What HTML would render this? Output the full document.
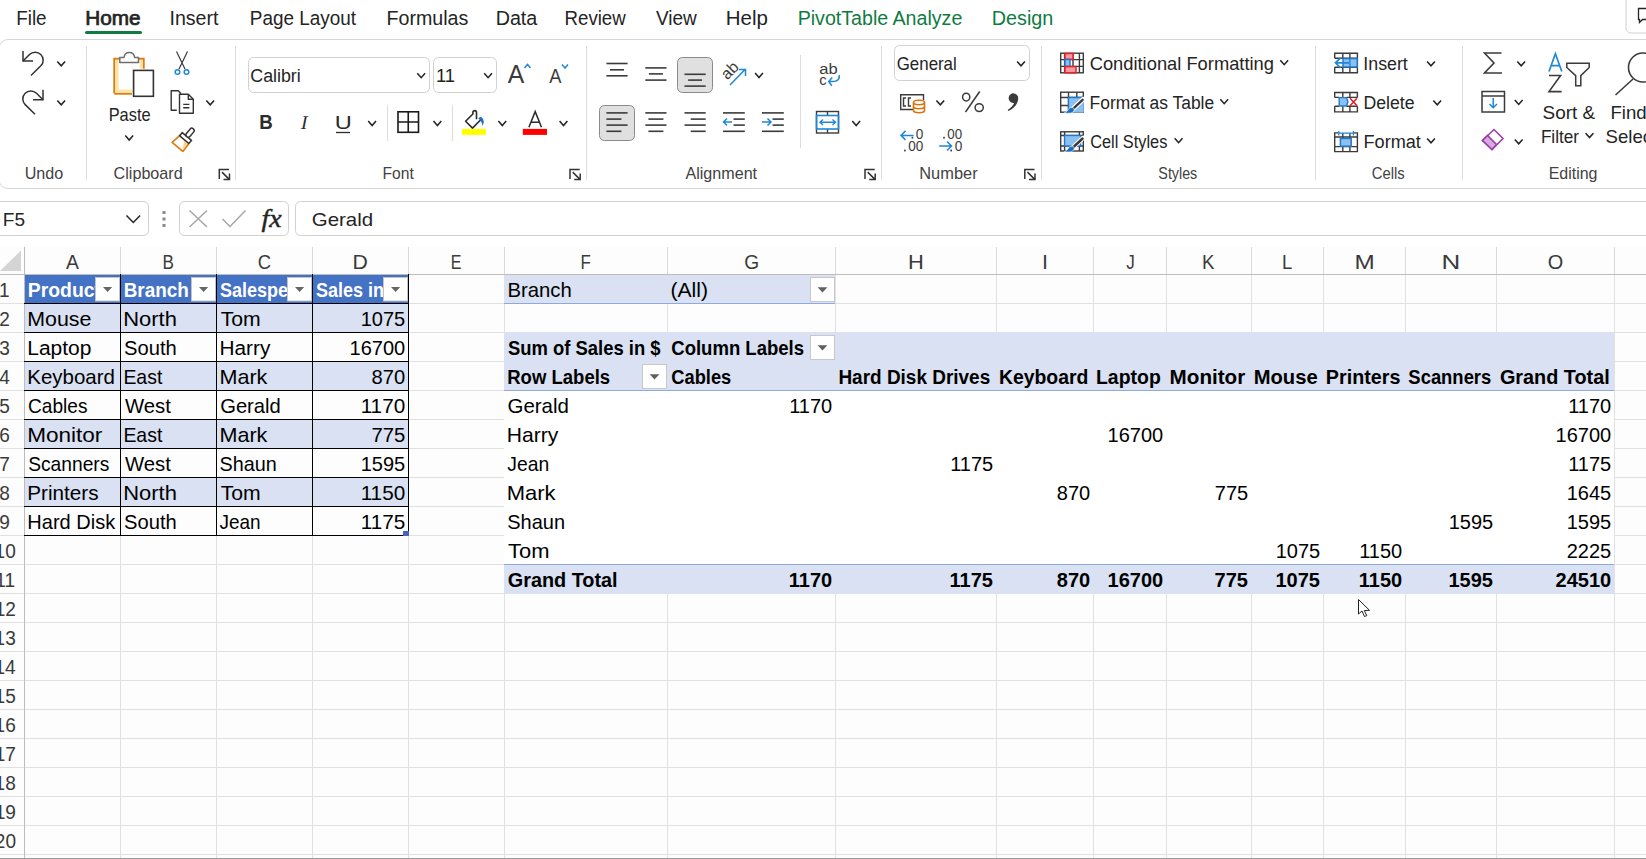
<!DOCTYPE html>
<html><head><meta charset="utf-8"><style>
html,body{margin:0;padding:0;background:#ffffff;width:1646px;height:859px;overflow:hidden}
svg{display:block;font-family:"Liberation Sans", sans-serif}
</style></head><body>
<svg width="1646" height="859" viewBox="0 0 1646 859" font-family='"Liberation Sans", sans-serif'>
<text transform="matrix(0.9669,0,0,1,16.24,25.00)" font-size="19.5" fill="#242424">File</text>
<text transform="matrix(1.0650,0,0,1,85.19,25.00)" font-size="19.5" fill="#242424" stroke="#242424" stroke-width="0.7">Home</text>
<text transform="matrix(1.0043,0,0,1,169.49,25.00)" font-size="19.5" fill="#242424">Insert</text>
<text transform="matrix(0.9709,0,0,1,249.84,25.00)" font-size="19.5" fill="#242424">Page Layout</text>
<text transform="matrix(1.0079,0,0,1,386.48,25.00)" font-size="19.5" fill="#242424">Formulas</text>
<text transform="matrix(1.0105,0,0,1,495.67,25.00)" font-size="19.5" fill="#242424">Data</text>
<text transform="matrix(0.9567,0,0,1,564.56,25.00)" font-size="19.5" fill="#242424">Review</text>
<text transform="matrix(0.9743,0,0,1,655.91,25.00)" font-size="19.5" fill="#242424">View</text>
<text transform="matrix(1.0509,0,0,1,725.71,25.00)" font-size="19.5" fill="#242424">Help</text>
<text transform="matrix(1.0067,0,0,1,797.68,25.00)" font-size="19.5" fill="#0f7b3f">PivotTable Analyze</text>
<text transform="matrix(1.0144,0,0,1,991.77,25.00)" font-size="19.5" fill="#0f7b3f">Design</text>
<rect x="85" y="31" width="57" height="3" fill="#107c41" rx="1.5"/>
<rect x="1626" y="-4" width="40" height="37" rx="5" fill="none" stroke="#d1d1d1" stroke-width="1"/>
<path d="M1638.5 8.5 h10 v11 h-6 l-3 3 v-3 h-1 z" fill="none" stroke="#242424" stroke-width="1.3"/>
<rect x="-1" y="39.5" width="1700" height="149" rx="9" fill="#ffffff" stroke="#d6d6d6" stroke-width="1"/>
<line x1="86.5" y1="46" x2="86.5" y2="180" stroke="#dcdcdc" stroke-width="1" />
<line x1="235.5" y1="46" x2="235.5" y2="180" stroke="#dcdcdc" stroke-width="1" />
<line x1="586.5" y1="46" x2="586.5" y2="180" stroke="#dcdcdc" stroke-width="1" />
<line x1="881.5" y1="46" x2="881.5" y2="180" stroke="#dcdcdc" stroke-width="1" />
<line x1="1041.5" y1="46" x2="1041.5" y2="180" stroke="#dcdcdc" stroke-width="1" />
<line x1="1315.5" y1="46" x2="1315.5" y2="180" stroke="#dcdcdc" stroke-width="1" />
<line x1="1462.5" y1="46" x2="1462.5" y2="180" stroke="#dcdcdc" stroke-width="1" />
<text transform="matrix(1.0066,0,0,1,24.65,179.20)" font-size="16" fill="#424242">Undo</text>
<text transform="matrix(1.0093,0,0,1,113.59,179.20)" font-size="16" fill="#424242">Clipboard</text>
<text transform="matrix(0.9784,0,0,1,382.51,179.20)" font-size="16" fill="#424242">Font</text>
<text transform="matrix(1.0070,0,0,1,685.46,179.20)" font-size="16" fill="#424242">Alignment</text>
<text transform="matrix(1.0268,0,0,1,919.24,179.20)" font-size="16" fill="#424242">Number</text>
<text transform="matrix(0.8940,0,0,1,1158.36,179.20)" font-size="16" fill="#424242">Styles</text>
<text transform="matrix(0.9298,0,0,1,1371.76,179.20)" font-size="16" fill="#424242">Cells</text>
<text transform="matrix(0.9979,0,0,1,1548.68,179.20)" font-size="16" fill="#424242">Editing</text>
<g fill="none" stroke="#333" stroke-width="1.5"><path d="M219.3 179.1 V169.4 H229.0"/><path d="M222.0 172.1 L229.5 179.6 M229.5 173.6 V179.6 H223.5"/></g>
<g fill="none" stroke="#333" stroke-width="1.5"><path d="M570.0 179.1 V169.4 H579.7"/><path d="M572.7 172.1 L580.2 179.6 M580.2 173.6 V179.6 H574.2"/></g>
<g fill="none" stroke="#333" stroke-width="1.5"><path d="M865.0 179.1 V169.4 H874.7"/><path d="M867.7 172.1 L875.2 179.6 M875.2 173.6 V179.6 H869.2"/></g>
<g fill="none" stroke="#333" stroke-width="1.5"><path d="M1024.8 179.1 V169.4 H1034.5"/><path d="M1027.5 172.1 L1035 179.6 M1035 173.6 V179.6 H1029"/></g>
<g fill="none" stroke="#333" stroke-width="1.5"><path d="M23 51 V61 H33" /><path d="M23 61 L29.5 54.5 A8 8 0 1 1 40.82 65.82 L31 75.5"/></g>
<g fill="none" stroke="#333" stroke-width="1.5" transform="translate(66,38.8) scale(-1,1)"><path d="M23 51 V61 H33" /><path d="M23 61 L29.5 54.5 A8 8 0 1 1 40.82 65.82 L31 75.5"/></g>
<path d="M57.30 61.40 L61.20 65.80 L65.10 61.40" fill="none" stroke="#242424" stroke-width="1.55"/>
<path d="M57.30 100.40 L61.20 104.80 L65.10 100.40" fill="none" stroke="#242424" stroke-width="1.55"/>
<path d="M114.3 93.2 V58.8 H143.7 V68.7" fill="none" stroke="#e07b12" stroke-width="2"/><path d="M114.3 93.7 H132" fill="none" stroke="#e07b12" stroke-width="2"/><path d="M115.3 59.8 V92.7 H132.5 V59.8 Z" fill="#fbe3a4"/><path d="M118.6 59.8 V89.6 H132.5 V59.8 Z" fill="#ffffff"/><path d="M139.6 59.8 H142.7 V68.5 H139.6 Z" fill="#fbe3a4"/><path d="M119.8 62.5 V57.5 H124 Q124.5 52.5 129.3 52.5 Q134.1 52.5 134.6 57.5 H138.5 V62.5 Z" fill="#ffffff" stroke="#6e6e6e" stroke-width="1.5" stroke-linejoin="round"/><rect x="133.6" y="70.4" width="19.8" height="25.9" fill="#ffffff" stroke="#333" stroke-width="1.6"/>
<text transform="matrix(0.8828,0,0,1,108.65,121.20)" font-size="18.6" fill="#242424">Paste</text>
<path d="M125.30 135.60 L129.20 140.00 L133.10 135.60" fill="none" stroke="#242424" stroke-width="1.55"/>
<g fill="none" stroke="#3b3b3b" stroke-width="1.2"><path d="M176.5 51.5 L185 69 M187.5 51.5 L179 69"/></g><g fill="none" stroke="#1e88d6" stroke-width="1.5"><circle cx="177.5" cy="72" r="2.3"/><circle cx="186.5" cy="72" r="2.3"/></g>
<g fill="none" stroke="#333" stroke-width="1.4" stroke-linejoin="round"><path d="M176.8 110.2 H171.2 V90.8 H178.3 L181 93.8"/><path d="M179.5 94.3 H188.3 L193.3 99.3 V113.3 H179.5 Z"/><path d="M188.3 94.3 V99.3 H193.3"/><path d="M183.2 104.4 h6.2 M183.2 107.8 h6.2"/></g>
<path d="M206.30 100.40 L210.20 104.80 L214.10 100.40" fill="none" stroke="#242424" stroke-width="1.55"/>
<g transform="translate(184.6,139.2) rotate(-50)"><path d="M-0.5 -6 L-10.5 -7.5 L-10.5 6.5 L-0.5 6 Z" fill="#ffffff" stroke="#e07b12" stroke-width="1.7" stroke-linejoin="round"/><path d="M-1.5 0.5 L-9.7 5.8 L-1.5 5 Z" fill="#fbd58a"/><rect x="-0.5" y="-6" width="4" height="12" fill="#ffffff" stroke="#333" stroke-width="1.5"/><rect x="3.5" y="-2.3" width="10" height="4.6" rx="2" fill="#ffffff" stroke="#333" stroke-width="1.5"/></g>
<rect x="248.5" y="57.5" width="181" height="35" rx="5" fill="#fff" stroke="#d1d1d1"/>
<rect x="433.5" y="57.5" width="63" height="35" rx="5" fill="#fff" stroke="#d1d1d1"/>
<text transform="matrix(0.9576,0,0,1,250.31,82.00)" font-size="18.6" fill="#242424">Calibri</text>
<text transform="matrix(0.9930,0,0,1,435.91,82.00)" font-size="18.6" fill="#242424">11</text>
<path d="M417.30 73.30 L421.20 77.70 L425.10 73.30" fill="none" stroke="#242424" stroke-width="1.55"/>
<path d="M484.20 73.30 L488.10 77.70 L492.00 73.30" fill="none" stroke="#242424" stroke-width="1.55"/>
<text transform="matrix(0.9902,0,0,1,507.74,82.60)" font-size="25" fill="#3b3b3b">A</text>
<path d="M524.5 68 L527.5 64.5 L530.5 68" fill="none" stroke="#1e88d6" stroke-width="1.5"/>
<text transform="matrix(0.9132,0,0,1,549.25,82.60)" font-size="20" fill="#3b3b3b">A</text>
<path d="M562 64.5 L565 68 L568 64.5" fill="none" stroke="#1e88d6" stroke-width="1.5"/>
<text transform="matrix(0.9584,0,0,1,259.34,128.60)" font-size="19.5" font-weight="700" fill="#2b2b2b">B</text>
<text transform="matrix(1,0,-0.2,1,300,128.6)" font-size="19.5" font-family="Liberation Serif" fill="#2b2b2b">I</text>
<text transform="matrix(1.2428,0,0,1,334.67,129.30)" font-size="19" fill="#2b2b2b">U</text>
<line x1="336" y1="132.5" x2="350" y2="132.5" stroke="#2b2b2b" stroke-width="1.3" />
<path d="M368.20 121.10 L372.10 125.50 L376.00 121.10" fill="none" stroke="#242424" stroke-width="1.55"/>
<line x1="387.5" y1="105" x2="387.5" y2="141" stroke="#dcdcdc" stroke-width="1" />
<g fill="none" stroke="#1a1a1a" stroke-width="1.6"><rect x="398" y="111.8" width="20.5" height="20.5"/><path d="M408.25 111.8 V132.3 M398 122 H418.5"/></g>
<path d="M433.50 121.10 L437.40 125.50 L441.30 121.10" fill="none" stroke="#242424" stroke-width="1.55"/>
<line x1="452.5" y1="105" x2="452.5" y2="141" stroke="#dcdcdc" stroke-width="1" />
<path d="M481.2 119.3 L472.5 128.1 L465.6 121.3 L472.9 114 V112.4 A1.8 1.8 0 0 1 476.5 112.4 V119.3" fill="none" stroke="#2b2b2b" stroke-width="1.6" stroke-linejoin="round"/><path d="M478.3 118.6 Q479.5 116.3 481.5 117.2 Q484.2 119 483.8 122 L482.6 126.2 Q482 121.5 478.3 118.6 Z" fill="#1b6ec2"/>
<rect x="461.9" y="128.9" width="24.1" height="6" fill="#ffff00" />
<path d="M498.40 121.10 L502.30 125.50 L506.20 121.10" fill="none" stroke="#242424" stroke-width="1.55"/>
<path d="M528.9 127.2 L535.2 111.6 L541.5 127.2 M530.9 122.3 H539.5" fill="none" stroke="#2b2b2b" stroke-width="1.5"/>
<rect x="522.8" y="128.9" width="24.2" height="6" fill="#ff0000" />
<path d="M559.60 121.10 L563.50 125.50 L567.40 121.10" fill="none" stroke="#242424" stroke-width="1.55"/>
<rect x="677.5" y="57.5" width="35" height="35" rx="5" fill="#e0e0e0" stroke="#8a8a8a" stroke-width="1"/>
<rect x="599.5" y="105.5" width="35" height="35" rx="5" fill="#e0e0e0" stroke="#8a8a8a" stroke-width="1"/>
<line x1="606.4" y1="63.5" x2="627.6" y2="63.5" stroke="#3b3b3b" stroke-width="1.6" />
<line x1="610.0" y1="69.8" x2="624.0" y2="69.8" stroke="#3b3b3b" stroke-width="1.6" />
<line x1="606.4" y1="75.8" x2="627.6" y2="75.8" stroke="#3b3b3b" stroke-width="1.6" />
<line x1="645.3" y1="67.9" x2="666.5" y2="67.9" stroke="#3b3b3b" stroke-width="1.6" />
<line x1="648.9" y1="73.9" x2="662.9" y2="73.9" stroke="#3b3b3b" stroke-width="1.6" />
<line x1="645.3" y1="80.1" x2="666.5" y2="80.1" stroke="#3b3b3b" stroke-width="1.6" />
<line x1="684.5" y1="74.3" x2="705.7" y2="74.3" stroke="#3b3b3b" stroke-width="1.6" />
<line x1="688.1" y1="80.1" x2="702.1" y2="80.1" stroke="#3b3b3b" stroke-width="1.6" />
<line x1="684.5" y1="86.1" x2="705.7" y2="86.1" stroke="#3b3b3b" stroke-width="1.6" />
<text transform="translate(727.3,80.5) rotate(-45)" font-size="16" fill="#3b3b3b">ab</text>
<path d="M730 85 L745 69.5 M739 69.5 H745.5 V76" fill="none" stroke="#1e88d6" stroke-width="1.5"/>
<path d="M755.10 73.10 L759.00 77.50 L762.90 73.10" fill="none" stroke="#242424" stroke-width="1.55"/>
<line x1="606.4" y1="112.9" x2="627.6" y2="112.9" stroke="#3b3b3b" stroke-width="1.6" />
<line x1="606.4" y1="119.1" x2="621.4" y2="119.1" stroke="#3b3b3b" stroke-width="1.6" />
<line x1="606.4" y1="125.1" x2="627.6" y2="125.1" stroke="#3b3b3b" stroke-width="1.6" />
<line x1="606.4" y1="131.3" x2="621.4" y2="131.3" stroke="#3b3b3b" stroke-width="1.6" />
<line x1="645.3" y1="112.9" x2="666.5" y2="112.9" stroke="#3b3b3b" stroke-width="1.6" />
<line x1="648.4" y1="119.1" x2="663.4" y2="119.1" stroke="#3b3b3b" stroke-width="1.6" />
<line x1="645.3" y1="125.1" x2="666.5" y2="125.1" stroke="#3b3b3b" stroke-width="1.6" />
<line x1="648.4" y1="131.3" x2="663.4" y2="131.3" stroke="#3b3b3b" stroke-width="1.6" />
<line x1="684.5" y1="112.9" x2="705.7" y2="112.9" stroke="#3b3b3b" stroke-width="1.6" />
<line x1="690.7" y1="119.1" x2="705.7" y2="119.1" stroke="#3b3b3b" stroke-width="1.6" />
<line x1="684.5" y1="125.1" x2="705.7" y2="125.1" stroke="#3b3b3b" stroke-width="1.6" />
<line x1="690.7" y1="131.3" x2="705.7" y2="131.3" stroke="#3b3b3b" stroke-width="1.6" />
<line x1="723" y1="112.9" x2="744.8" y2="112.9" stroke="#3b3b3b" stroke-width="1.6" />
<line x1="723" y1="131.3" x2="744.8" y2="131.3" stroke="#3b3b3b" stroke-width="1.6" />
<line x1="733.5" y1="119.1" x2="744.8" y2="119.1" stroke="#3b3b3b" stroke-width="1.6" />
<line x1="733.5" y1="125.1" x2="744.8" y2="125.1" stroke="#3b3b3b" stroke-width="1.6" />
<path d="M732 122 H723.5 M727 118.5 L723.5 122 L727 125.5" fill="none" stroke="#1e88d6" stroke-width="1.5"/>
<line x1="762" y1="112.9" x2="783.8" y2="112.9" stroke="#3b3b3b" stroke-width="1.6" />
<line x1="762" y1="131.3" x2="783.8" y2="131.3" stroke="#3b3b3b" stroke-width="1.6" />
<line x1="772.5" y1="119.1" x2="783.8" y2="119.1" stroke="#3b3b3b" stroke-width="1.6" />
<line x1="772.5" y1="125.1" x2="783.8" y2="125.1" stroke="#3b3b3b" stroke-width="1.6" />
<path d="M762 122 H771 M767.5 118.5 L771 122 L767.5 125.5" fill="none" stroke="#1e88d6" stroke-width="1.5"/>
<line x1="800.5" y1="55" x2="800.5" y2="148" stroke="#dcdcdc" stroke-width="1" />
<text transform="matrix(1.0674,0,0,1,819.30,74.30)" font-size="15.5" fill="#3b3b3b">ab</text>
<text transform="matrix(0.9602,0,0,1,819.37,85.20)" font-size="15.5" fill="#3b3b3b">c</text>
<path d="M839.2 75.2 C840.2 79.8 836.5 82 829.2 81.5 M832.2 77.6 L828.7 81.5 L831.8 85.8" fill="none" stroke="#1e88d6" stroke-width="1.5"/>
<g fill="none" stroke="#3b3b3b" stroke-width="1.4"><rect x="816.5" y="111.5" width="22" height="21.5"/><path d="M827.5 111.5 V115.5 M827.5 129 V133"/></g><rect x="816.5" y="115.5" width="22" height="13.5" fill="none" stroke="#1e88d6" stroke-width="1.6"/><path d="M820 122.2 H835.5 M823 119.5 L820 122.2 L823 125 M832.5 119.5 L835.5 122.2 L832.5 125" fill="none" stroke="#1e88d6" stroke-width="1.4"/>
<path d="M852.30 121.10 L856.20 125.50 L860.10 121.10" fill="none" stroke="#242424" stroke-width="1.55"/>
<rect x="894.5" y="45.5" width="135" height="35" rx="5" fill="#fff" stroke="#d1d1d1"/>
<text transform="matrix(0.9065,0,0,1,896.76,70.00)" font-size="18.6" fill="#242424">General</text>
<path d="M1017.10 61.40 L1021.00 65.80 L1024.90 61.40" fill="none" stroke="#242424" stroke-width="1.55"/>
<g fill="none" stroke="#3b3b3b" stroke-width="1.4"><path d="M913 109.5 H900.7 V94.7 H923.5 V100"/><path d="M906 98 h-2.5 v8 h2.5 M911 98 h-2.5 v8 h2.5"/></g><g fill="#fff" stroke="#d9730d" stroke-width="1.6"><path d="M913.5 102.5 v8 a5.5 2.2 0 0 0 11 0 v-8"/><ellipse cx="919" cy="102.5" rx="5.5" ry="2.2"/><path d="M913.5 106.5 a5.5 2.2 0 0 0 11 0" fill="none"/></g>
<path d="M936.40 100.40 L940.30 104.80 L944.20 100.40" fill="none" stroke="#242424" stroke-width="1.55"/>
<g fill="none" stroke="#3b3b3b" stroke-width="1.5"><ellipse cx="966.2" cy="97.1" rx="3.6" ry="3.9"/><ellipse cx="979.2" cy="107.6" rx="4.1" ry="3.9"/><path d="M965.5 112 L979.7 91.5"/></g>
<path d="M1012.7 93.2 a5.1 5.1 0 0 1 5.5 5.6 c-0.5 6 -4.8 10 -10 12.2 l-0.5 -1 c3.2 -2 5.8 -4.8 6.3 -6.9 a5 5 0 0 1 -1.3 -9.9 z" fill="#3b3b3b"/>
<text transform="matrix(0.9723,0,0,1,915.76,138.90)" font-size="14" fill="#3b3b3b">0</text>
<rect x="911.6" y="136.8" width="1.6" height="1.8" fill="#3b3b3b"/>
<rect x="904.1" y="149.6" width="1.6" height="1.8" fill="#3b3b3b"/>
<text transform="matrix(0.9685,0,0,1,908.26,151.20)" font-size="14" fill="#3b3b3b">00</text>
<path d="M913.6 135.4 H901 M905.5 130.9 L901 135.4 L905.5 139.9" fill="none" stroke="#1e88d6" stroke-width="1.5"/>
<rect x="943.2" y="136.8" width="1.6" height="1.8" fill="#3b3b3b"/>
<text transform="matrix(0.9547,0,0,1,947.37,138.90)" font-size="14" fill="#3b3b3b">00</text>
<rect x="950.4" y="149.6" width="1.6" height="1.8" fill="#3b3b3b"/>
<text transform="matrix(0.9723,0,0,1,954.66,151.20)" font-size="14" fill="#3b3b3b">0</text>
<path d="M939.2 146 H951.5 M947 141.5 L951.5 146 L947 150.5" fill="none" stroke="#1e88d6" stroke-width="1.5"/>
<g fill="none" stroke="#3b3b3b" stroke-width="1.4"><rect x="1060.7" y="53.2" width="22.6" height="19.6"/><path d="M1064.6 53.2 V72.8 M1073 53.2 V72.8 M1079.4 53.2 V72.8 M1060.7 59.6 H1083.3 M1060.7 66.4 H1083.3"/></g>
<rect x="1065" y="53.5" width="8" height="5.8" fill="#f49aa3" stroke="#e8202a" stroke-width="1.5"/><rect x="1065" y="59.5" width="5" height="6.8" fill="#8cc0f0" stroke="#1e78d0" stroke-width="1.4"/><rect x="1065" y="66.6" width="11" height="6.2" fill="#f49aa3" stroke="#e8202a" stroke-width="1.5"/>
<text transform="matrix(0.9853,0,0,1,1089.68,70.00)" font-size="18.6" fill="#242424">Conditional Formatting</text>
<path d="M1280.30 60.30 L1284.20 64.70 L1288.10 60.30" fill="none" stroke="#242424" stroke-width="1.55"/>
<g fill="none" stroke="#3b3b3b" stroke-width="1.4"><rect x="1060.7" y="92.2" width="22.6" height="20"/><path d="M1068.5 92.2 V112.2 M1076.8 92.2 V112.2 M1060.7 97.5 H1083.3 M1060.7 105.5 H1083.3"/></g>
<rect x="1068.5" y="97.5" width="15.3" height="15.2" fill="#8cc0f0"/><path d="M1068.5 112.5 V97.5 H1083.8" fill="none" stroke="#1e78d0" stroke-width="1.3"/>
<path d="M1083.2 99.2 L1072.5 109.2" stroke="#ffffff" stroke-width="4.6" fill="none" stroke-linecap="round"/><path d="M1082.6 99.8 L1073 108.8" stroke="#3b3b3b" stroke-width="2.4" fill="none" stroke-linecap="round"/><path d="M1064.3 112.8 C1066 112.5 1067.5 111 1068.5 109.2 C1069.5 107.5 1072 106.8 1074 108.3 C1075 110 1073.5 112.3 1071.5 112.8 C1069.5 113.5 1066.5 113.5 1064.3 112.8 Z" fill="#1e6fc2" stroke="#ffffff" stroke-width="0.6"/>
<text transform="matrix(0.9375,0,0,1,1089.56,108.70)" font-size="18.6" fill="#242424">Format as Table</text>
<path d="M1220.30 99.30 L1224.20 103.70 L1228.10 99.30" fill="none" stroke="#242424" stroke-width="1.55"/>
<g fill="none" stroke="#3b3b3b" stroke-width="1.4"><rect x="1060.7" y="131.8" width="22.6" height="19.2"/><path d="M1064.6 131.8 V151 M1079.4 131.8 V151 M1060.7 135.5 H1083.3 M1060.7 146 H1083.3 M1072 146 V151"/></g>
<rect x="1064.6" y="135.5" width="16" height="10.5" fill="#8cc0f0" stroke="#1e78d0" stroke-width="1.3"/>
<g transform="translate(0,38.7)"><path d="M1083.2 99.2 L1072.5 109.2" stroke="#ffffff" stroke-width="4.6" fill="none" stroke-linecap="round"/><path d="M1082.6 99.8 L1073 108.8" stroke="#3b3b3b" stroke-width="2.4" fill="none" stroke-linecap="round"/><path d="M1064.3 112.8 C1066 112.5 1067.5 111 1068.5 109.2 C1069.5 107.5 1072 106.8 1074 108.3 C1075 110 1073.5 112.3 1071.5 112.8 C1069.5 113.5 1066.5 113.5 1064.3 112.8 Z" fill="#1e6fc2" stroke="#ffffff" stroke-width="0.6"/></g>
<text transform="matrix(0.8794,0,0,1,1090.18,147.50)" font-size="18.6" fill="#242424">Cell Styles</text>
<path d="M1174.70 138.30 L1178.60 142.70 L1182.50 138.30" fill="none" stroke="#242424" stroke-width="1.55"/>
<g fill="none" stroke="#3b3b3b" stroke-width="1.4"><path d="M1334.7 58.3 V53.2 H1357.4 V72.8 H1334.7 V67.2 M1334.7 58.3 H1357.4 M1334.7 67.2 H1357.4 M1342.8 53.2 V58.3 M1349.9 53.2 V58.3 M1342.8 67.2 V72.8 M1349.9 67.2 V72.8"/></g>
<rect x="1343" y="58.6" width="14.2" height="8.4" fill="#8cc0f0" stroke="#1e78d0" stroke-width="1.4"/><path d="M1349.9 58.6 V67" stroke="#1e78d0" stroke-width="1.2"/>
<path d="M1349 62.8 H1335.5 M1340.5 57.8 L1335.5 62.8 L1340.5 67.8" fill="none" stroke="#1e88d6" stroke-width="1.7"/>
<text transform="matrix(0.9565,0,0,1,1363.35,70.00)" font-size="18.6" fill="#242424">Insert</text>
<path d="M1427.10 61.40 L1431.00 65.80 L1434.90 61.40" fill="none" stroke="#242424" stroke-width="1.55"/>
<g fill="none" stroke="#3b3b3b" stroke-width="1.4"><path d="M1334.7 97.4 V92.5 H1357.4 V97.4 M1334.7 97.4 H1339 M1346.7 97.4 H1357.4 M1334.7 106.3 H1339 M1346.7 106.3 H1357.4 M1334.7 106.3 V111.9 H1357.4 V106.3 M1342.8 92.5 V97.4 M1349.9 92.5 V97.4 M1342.8 106.3 V111.9 M1349.9 106.3 V111.9"/></g>
<path d="M1339.2 97.6 H1346.4 L1348 101.8 L1346.4 106 H1339.2 Z" fill="#8cc0f0" stroke="#1e78d0" stroke-width="1.4"/>
<path d="M1350 98.3 L1357 105.8 M1357 98.3 L1350 105.8" stroke="#e8202a" stroke-width="1.6"/>
<text transform="matrix(0.9508,0,0,1,1363.54,108.70)" font-size="18.6" fill="#242424">Delete</text>
<path d="M1433.30 100.40 L1437.20 104.80 L1441.10 100.40" fill="none" stroke="#242424" stroke-width="1.55"/>
<g fill="none" stroke="#3b3b3b" stroke-width="1.4"><path d="M1338.3 132.9 H1334.7 V151.6 H1357.4 V132.9 H1353.8 M1334.7 137 H1357.4 M1334.7 146.6 H1357.4 M1342.8 132.9 V151.6 M1349.9 132.9 V151.6"/></g>
<rect x="1340.4" y="138.4" width="10.8" height="7.8" fill="#8cc0f0" stroke="#1e78d0" stroke-width="1.5"/>
<path d="M1338.8 131 V135.5 M1353.4 131 V135.5 M1338.8 133.2 H1353.4" fill="none" stroke="#1e88d6" stroke-width="1.3"/>
<text transform="matrix(0.9748,0,0,1,1363.50,147.50)" font-size="18.6" fill="#242424">Format</text>
<path d="M1427.10 138.40 L1431.00 142.80 L1434.90 138.40" fill="none" stroke="#242424" stroke-width="1.55"/>
<path d="M1501.5 53 H1484.5 L1494 63 L1484.5 73 H1502" fill="none" stroke="#3b3b3b" stroke-width="1.6"/>
<path d="M1517.30 61.40 L1521.20 65.80 L1525.10 61.40" fill="none" stroke="#242424" stroke-width="1.55"/>
<g fill="none" stroke="#3b3b3b" stroke-width="1.5"><rect x="1482" y="91.5" width="22.5" height="20.5"/><path d="M1482 96 H1504.5"/></g><path d="M1493.2 98 V107.5 M1489.5 104 L1493.2 107.7 L1497 104" fill="none" stroke="#1e88d6" stroke-width="1.5"/>
<path d="M1514.80 100.00 L1518.70 104.40 L1522.60 100.00" fill="none" stroke="#242424" stroke-width="1.55"/>
<path d="M1482.5 140.5 L1494 129.5 L1503 138.5 L1492 149.5 Z" fill="none" stroke="#9b3dab" stroke-width="1.6"/><path d="M1482.5 140.5 L1487.5 135.5 L1496.5 144.5 L1492 149.5 Z" fill="#d8a8e0" stroke="#9b3dab" stroke-width="1.6"/>
<path d="M1514.80 139.40 L1518.70 143.80 L1522.60 139.40" fill="none" stroke="#242424" stroke-width="1.55"/>
<path d="M1549 71.5 L1555.4 53.8 L1561.8 71.5 M1551.2 65.6 H1559.6" fill="none" stroke="#1e88d6" stroke-width="1.7"/>
<path d="M1549 75.5 H1560.6 L1549 91.6 H1561.6" fill="none" stroke="#3b3b3b" stroke-width="1.6"/>
<path d="M1566.8 63.3 H1589.2 V67.5 L1580.8 75.6 V85.8 H1575.7 V75.6 L1566.8 67.5 Z" fill="none" stroke="#3b3b3b" stroke-width="1.5"/>
<text transform="matrix(1.0179,0,0,1,1542.55,118.80)" font-size="18.6" fill="#242424">Sort &amp;</text>
<text transform="matrix(0.9235,0,0,1,1540.88,142.70)" font-size="18.6" fill="#242424">Filter</text>
<path d="M1585.60 133.20 L1589.50 137.60 L1593.40 133.20" fill="none" stroke="#242424" stroke-width="1.55"/>
<circle cx="1643" cy="67.5" r="14.5" fill="none" stroke="#3b3b3b" stroke-width="1.6"/><path d="M1615.5 95 L1633 79" stroke="#3b3b3b" stroke-width="1.6"/>
<text transform="matrix(1.0000,0,0,1,1610.47,118.80)" font-size="18.6" fill="#242424">Find</text>
<text transform="matrix(1.0000,0,0,1,1605.56,142.70)" font-size="18.6" fill="#242424">Selec</text>
<rect x="-10.5" y="201.5" width="159" height="34" rx="5" fill="#fff" stroke="#d1d1d1"/>
<text transform="matrix(1.0318,0,0,1,2.83,225.60)" font-size="18.5" fill="#242424">F5</text>
<path d="M126.5 215.5 L133.3 222.5 L140.1 215.5" fill="none" stroke="#242424" stroke-width="1.5"/>
<g fill="#8a8a8a"><rect x="162.5" y="211" width="3" height="3"/><rect x="162.5" y="217.5" width="3" height="3"/><rect x="162.5" y="224" width="3" height="3"/></g>
<rect x="179.5" y="201.5" width="109" height="34" rx="5" fill="#fff" stroke="#d1d1d1"/>
<path d="M189.5 210.5 L207 227 M207 210.5 L189.5 227" stroke="#a6a6a6" stroke-width="1.5"/>
<path d="M222.5 219 L230 226.5 L245.5 210.5" fill="none" stroke="#a6a6a6" stroke-width="1.5"/>
<text transform="matrix(1.12,0,0,1,261.5,226.6)" font-family="Liberation Serif" font-style="italic" font-size="25" fill="#242424" stroke="#242424" stroke-width="0.4">fx</text>
<rect x="295.5" y="201.5" width="1400" height="34" rx="5" fill="#fff" stroke="#d1d1d1"/>
<text transform="matrix(1.1045,0,0,1,311.78,225.60)" font-size="18.5" fill="#242424">Gerald</text>
<rect x="0" y="247" width="1646" height="612" fill="#fdfdfd" />
<line x1="24.5" y1="247" x2="24.5" y2="274" stroke="#dadada" stroke-width="1" />
<line x1="120.5" y1="247" x2="120.5" y2="274" stroke="#dadada" stroke-width="1" />
<line x1="216.5" y1="247" x2="216.5" y2="274" stroke="#dadada" stroke-width="1" />
<line x1="312.5" y1="247" x2="312.5" y2="274" stroke="#dadada" stroke-width="1" />
<line x1="408.5" y1="247" x2="408.5" y2="274" stroke="#dadada" stroke-width="1" />
<line x1="504.5" y1="247" x2="504.5" y2="274" stroke="#dadada" stroke-width="1" />
<line x1="667.5" y1="247" x2="667.5" y2="274" stroke="#dadada" stroke-width="1" />
<line x1="835.5" y1="247" x2="835.5" y2="274" stroke="#dadada" stroke-width="1" />
<line x1="996.5" y1="247" x2="996.5" y2="274" stroke="#dadada" stroke-width="1" />
<line x1="1093.5" y1="247" x2="1093.5" y2="274" stroke="#dadada" stroke-width="1" />
<line x1="1166.5" y1="247" x2="1166.5" y2="274" stroke="#dadada" stroke-width="1" />
<line x1="1251.5" y1="247" x2="1251.5" y2="274" stroke="#dadada" stroke-width="1" />
<line x1="1323.5" y1="247" x2="1323.5" y2="274" stroke="#dadada" stroke-width="1" />
<line x1="1405.5" y1="247" x2="1405.5" y2="274" stroke="#dadada" stroke-width="1" />
<line x1="1496.5" y1="247" x2="1496.5" y2="274" stroke="#dadada" stroke-width="1" />
<line x1="1614.5" y1="247" x2="1614.5" y2="274" stroke="#dadada" stroke-width="1" />
<line x1="1760.5" y1="247" x2="1760.5" y2="274" stroke="#dadada" stroke-width="1" />
<line x1="120.5" y1="275" x2="120.5" y2="859" stroke="#e1e1e1" stroke-width="1" />
<line x1="216.5" y1="275" x2="216.5" y2="859" stroke="#e1e1e1" stroke-width="1" />
<line x1="312.5" y1="275" x2="312.5" y2="859" stroke="#e1e1e1" stroke-width="1" />
<line x1="408.5" y1="275" x2="408.5" y2="859" stroke="#e1e1e1" stroke-width="1" />
<line x1="504.5" y1="275" x2="504.5" y2="859" stroke="#e1e1e1" stroke-width="1" />
<line x1="667.5" y1="275" x2="667.5" y2="859" stroke="#e1e1e1" stroke-width="1" />
<line x1="835.5" y1="275" x2="835.5" y2="859" stroke="#e1e1e1" stroke-width="1" />
<line x1="996.5" y1="275" x2="996.5" y2="859" stroke="#e1e1e1" stroke-width="1" />
<line x1="1093.5" y1="275" x2="1093.5" y2="859" stroke="#e1e1e1" stroke-width="1" />
<line x1="1166.5" y1="275" x2="1166.5" y2="859" stroke="#e1e1e1" stroke-width="1" />
<line x1="1251.5" y1="275" x2="1251.5" y2="859" stroke="#e1e1e1" stroke-width="1" />
<line x1="1323.5" y1="275" x2="1323.5" y2="859" stroke="#e1e1e1" stroke-width="1" />
<line x1="1405.5" y1="275" x2="1405.5" y2="859" stroke="#e1e1e1" stroke-width="1" />
<line x1="1496.5" y1="275" x2="1496.5" y2="859" stroke="#e1e1e1" stroke-width="1" />
<line x1="1614.5" y1="275" x2="1614.5" y2="859" stroke="#e1e1e1" stroke-width="1" />
<line x1="1760.5" y1="275" x2="1760.5" y2="859" stroke="#e1e1e1" stroke-width="1" />
<line x1="25" y1="303.5" x2="1646" y2="303.5" stroke="#e1e1e1" stroke-width="1" />
<line x1="25" y1="332.5" x2="1646" y2="332.5" stroke="#e1e1e1" stroke-width="1" />
<line x1="25" y1="361.5" x2="1646" y2="361.5" stroke="#e1e1e1" stroke-width="1" />
<line x1="25" y1="390.5" x2="1646" y2="390.5" stroke="#e1e1e1" stroke-width="1" />
<line x1="25" y1="419.5" x2="1646" y2="419.5" stroke="#e1e1e1" stroke-width="1" />
<line x1="25" y1="448.5" x2="1646" y2="448.5" stroke="#e1e1e1" stroke-width="1" />
<line x1="25" y1="477.5" x2="1646" y2="477.5" stroke="#e1e1e1" stroke-width="1" />
<line x1="25" y1="506.5" x2="1646" y2="506.5" stroke="#e1e1e1" stroke-width="1" />
<line x1="25" y1="535.5" x2="1646" y2="535.5" stroke="#e1e1e1" stroke-width="1" />
<line x1="25" y1="564.5" x2="1646" y2="564.5" stroke="#e1e1e1" stroke-width="1" />
<line x1="25" y1="593.5" x2="1646" y2="593.5" stroke="#e1e1e1" stroke-width="1" />
<line x1="25" y1="622.5" x2="1646" y2="622.5" stroke="#e1e1e1" stroke-width="1" />
<line x1="25" y1="651.5" x2="1646" y2="651.5" stroke="#e1e1e1" stroke-width="1" />
<line x1="25" y1="680.5" x2="1646" y2="680.5" stroke="#e1e1e1" stroke-width="1" />
<line x1="25" y1="709.5" x2="1646" y2="709.5" stroke="#e1e1e1" stroke-width="1" />
<line x1="25" y1="738.5" x2="1646" y2="738.5" stroke="#e1e1e1" stroke-width="1" />
<line x1="25" y1="767.5" x2="1646" y2="767.5" stroke="#e1e1e1" stroke-width="1" />
<line x1="25" y1="796.5" x2="1646" y2="796.5" stroke="#e1e1e1" stroke-width="1" />
<line x1="25" y1="825.5" x2="1646" y2="825.5" stroke="#e1e1e1" stroke-width="1" />
<line x1="25" y1="854.5" x2="1646" y2="854.5" stroke="#e1e1e1" stroke-width="1" />
<line x1="25" y1="883.5" x2="1646" y2="883.5" stroke="#e1e1e1" stroke-width="1" />
<line x1="0" y1="303.5" x2="24" y2="303.5" stroke="#e1e1e1" stroke-width="1" />
<line x1="0" y1="332.5" x2="24" y2="332.5" stroke="#e1e1e1" stroke-width="1" />
<line x1="0" y1="361.5" x2="24" y2="361.5" stroke="#e1e1e1" stroke-width="1" />
<line x1="0" y1="390.5" x2="24" y2="390.5" stroke="#e1e1e1" stroke-width="1" />
<line x1="0" y1="419.5" x2="24" y2="419.5" stroke="#e1e1e1" stroke-width="1" />
<line x1="0" y1="448.5" x2="24" y2="448.5" stroke="#e1e1e1" stroke-width="1" />
<line x1="0" y1="477.5" x2="24" y2="477.5" stroke="#e1e1e1" stroke-width="1" />
<line x1="0" y1="506.5" x2="24" y2="506.5" stroke="#e1e1e1" stroke-width="1" />
<line x1="0" y1="535.5" x2="24" y2="535.5" stroke="#e1e1e1" stroke-width="1" />
<line x1="0" y1="564.5" x2="24" y2="564.5" stroke="#e1e1e1" stroke-width="1" />
<line x1="0" y1="593.5" x2="24" y2="593.5" stroke="#e1e1e1" stroke-width="1" />
<line x1="0" y1="622.5" x2="24" y2="622.5" stroke="#e1e1e1" stroke-width="1" />
<line x1="0" y1="651.5" x2="24" y2="651.5" stroke="#e1e1e1" stroke-width="1" />
<line x1="0" y1="680.5" x2="24" y2="680.5" stroke="#e1e1e1" stroke-width="1" />
<line x1="0" y1="709.5" x2="24" y2="709.5" stroke="#e1e1e1" stroke-width="1" />
<line x1="0" y1="738.5" x2="24" y2="738.5" stroke="#e1e1e1" stroke-width="1" />
<line x1="0" y1="767.5" x2="24" y2="767.5" stroke="#e1e1e1" stroke-width="1" />
<line x1="0" y1="796.5" x2="24" y2="796.5" stroke="#e1e1e1" stroke-width="1" />
<line x1="0" y1="825.5" x2="24" y2="825.5" stroke="#e1e1e1" stroke-width="1" />
<line x1="0" y1="854.5" x2="24" y2="854.5" stroke="#e1e1e1" stroke-width="1" />
<line x1="0" y1="883.5" x2="24" y2="883.5" stroke="#e1e1e1" stroke-width="1" />
<line x1="0" y1="274.5" x2="1646" y2="274.5" stroke="#bdbdbd" stroke-width="1" />
<line x1="24.5" y1="247" x2="24.5" y2="859" stroke="#bdbdbd" stroke-width="1" />
<path d="M21 250.5 V271 H0 Z" fill="#d4d4d4"/>
<text transform="matrix(0.9425,0,0,1,66.05,269.00)" font-size="20.5" fill="#3a3a3a">A</text>
<text transform="matrix(0.8336,0,0,1,162.54,269.00)" font-size="20.5" fill="#3a3a3a">B</text>
<text transform="matrix(0.8988,0,0,1,257.73,269.00)" font-size="20.5" fill="#3a3a3a">C</text>
<text transform="matrix(1.0374,0,0,1,352.45,269.00)" font-size="20.5" fill="#3a3a3a">D</text>
<text transform="matrix(0.7823,0,0,1,450.83,269.00)" font-size="20.5" fill="#3a3a3a">E</text>
<text transform="matrix(0.8205,0,0,1,580.51,269.00)" font-size="20.5" fill="#3a3a3a">F</text>
<text transform="matrix(0.9345,0,0,1,744.29,269.00)" font-size="20.5" fill="#3a3a3a">G</text>
<text transform="matrix(1.0675,0,0,1,908.09,269.00)" font-size="20.5" fill="#3a3a3a">H</text>
<text transform="matrix(1.0547,0,0,1,1042.00,269.00)" font-size="20.5" fill="#3a3a3a">I</text>
<text transform="matrix(0.8328,0,0,1,1126.24,269.00)" font-size="20.5" fill="#3a3a3a">J</text>
<text transform="matrix(0.9117,0,0,1,1202.11,269.00)" font-size="20.5" fill="#3a3a3a">K</text>
<text transform="matrix(0.8980,0,0,1,1281.93,269.00)" font-size="20.5" fill="#3a3a3a">L</text>
<text transform="matrix(1.1839,0,0,1,1354.40,269.00)" font-size="20.5" fill="#3a3a3a">M</text>
<text transform="matrix(1.2687,0,0,1,1441.60,269.00)" font-size="20.5" fill="#3a3a3a">N</text>
<text transform="matrix(0.9720,0,0,1,1547.75,269.00)" font-size="20.5" fill="#3a3a3a">O</text>
<text transform="matrix(0.9300,0,0,1,-1.05,297.00)" font-size="20.5" fill="#3a3a3a">1</text>
<text transform="matrix(0.9300,0,0,1,-0.79,326.00)" font-size="20.5" fill="#3a3a3a">2</text>
<text transform="matrix(0.9300,0,0,1,-0.74,355.00)" font-size="20.5" fill="#3a3a3a">3</text>
<text transform="matrix(0.9300,0,0,1,-0.74,384.00)" font-size="20.5" fill="#3a3a3a">4</text>
<text transform="matrix(0.9300,0,0,1,-0.79,413.00)" font-size="20.5" fill="#3a3a3a">5</text>
<text transform="matrix(0.9300,0,0,1,-0.86,442.00)" font-size="20.5" fill="#3a3a3a">6</text>
<text transform="matrix(0.9300,0,0,1,-0.79,471.00)" font-size="20.5" fill="#3a3a3a">7</text>
<text transform="matrix(0.9300,0,0,1,-0.79,500.00)" font-size="20.5" fill="#3a3a3a">8</text>
<text transform="matrix(0.9300,0,0,1,-0.81,529.00)" font-size="20.5" fill="#3a3a3a">9</text>
<text transform="matrix(0.9300,0,0,1,-5.44,558.00)" font-size="20.5" fill="#3a3a3a">10</text>
<text transform="matrix(0.9300,0,0,1,-4.65,587.00)" font-size="20.5" fill="#3a3a3a">11</text>
<text transform="matrix(0.9300,0,0,1,-5.32,616.00)" font-size="20.5" fill="#3a3a3a">12</text>
<text transform="matrix(0.9300,0,0,1,-5.39,645.00)" font-size="20.5" fill="#3a3a3a">13</text>
<text transform="matrix(0.9300,0,0,1,-5.53,674.00)" font-size="20.5" fill="#3a3a3a">14</text>
<text transform="matrix(0.9300,0,0,1,-5.41,703.00)" font-size="20.5" fill="#3a3a3a">15</text>
<text transform="matrix(0.9300,0,0,1,-5.39,732.00)" font-size="20.5" fill="#3a3a3a">16</text>
<text transform="matrix(0.9300,0,0,1,-5.32,761.00)" font-size="20.5" fill="#3a3a3a">17</text>
<text transform="matrix(0.9300,0,0,1,-5.39,790.00)" font-size="20.5" fill="#3a3a3a">18</text>
<text transform="matrix(0.9300,0,0,1,-5.37,819.00)" font-size="20.5" fill="#3a3a3a">19</text>
<text transform="matrix(0.9300,0,0,1,-5.20,848.00)" font-size="20.5" fill="#3a3a3a">20</text>
<rect x="25" y="275" width="384" height="28" fill="#4472c4" />
<rect x="25" y="304" width="384" height="28" fill="#d9e1f2" />
<rect x="25" y="333" width="384" height="28" fill="#fdfdfd" />
<rect x="25" y="362" width="384" height="28" fill="#d9e1f2" />
<rect x="25" y="391" width="384" height="28" fill="#fdfdfd" />
<rect x="25" y="420" width="384" height="28" fill="#d9e1f2" />
<rect x="25" y="449" width="384" height="28" fill="#fdfdfd" />
<rect x="25" y="478" width="384" height="28" fill="#d9e1f2" />
<rect x="25" y="507" width="384" height="28" fill="#fdfdfd" />
<line x1="24" y1="303.5" x2="409" y2="303.5" stroke="#000" stroke-width="1" />
<line x1="24" y1="332.5" x2="409" y2="332.5" stroke="#000" stroke-width="1" />
<line x1="24" y1="361.5" x2="409" y2="361.5" stroke="#000" stroke-width="1" />
<line x1="24" y1="390.5" x2="409" y2="390.5" stroke="#000" stroke-width="1" />
<line x1="24" y1="419.5" x2="409" y2="419.5" stroke="#000" stroke-width="1" />
<line x1="24" y1="448.5" x2="409" y2="448.5" stroke="#000" stroke-width="1" />
<line x1="24" y1="477.5" x2="409" y2="477.5" stroke="#000" stroke-width="1" />
<line x1="24" y1="506.5" x2="409" y2="506.5" stroke="#000" stroke-width="1" />
<line x1="24" y1="535.5" x2="409" y2="535.5" stroke="#000" stroke-width="1" />
<line x1="120.5" y1="274" x2="120.5" y2="536" stroke="#000" stroke-width="1" />
<line x1="216.5" y1="274" x2="216.5" y2="536" stroke="#000" stroke-width="1" />
<line x1="312.5" y1="274" x2="312.5" y2="536" stroke="#000" stroke-width="1" />
<line x1="408.5" y1="274" x2="408.5" y2="536" stroke="#000" stroke-width="1" />
<clipPath id="cp1"><rect x="25" y="275" width="94" height="28"/></clipPath>
<g clip-path="url(#cp1)">
<text transform="matrix(0.9700,0,0,1,27.79,297.00)" font-size="20" font-weight="700" fill="#ffffff">Product</text>
</g>
<clipPath id="cp2"><rect x="121" y="275" width="94" height="28"/></clipPath>
<g clip-path="url(#cp2)">
<text transform="matrix(0.9450,0,0,1,123.72,297.00)" font-size="20" font-weight="700" fill="#ffffff">Branch</text>
</g>
<clipPath id="cp3"><rect x="217" y="275" width="94" height="28"/></clipPath>
<g clip-path="url(#cp3)">
<text transform="matrix(0.9000,0,0,1,219.96,297.00)" font-size="20" font-weight="700" fill="#ffffff">Salesperson</text>
</g>
<clipPath id="cp4"><rect x="313" y="275" width="94" height="28"/></clipPath>
<g clip-path="url(#cp4)">
<text transform="matrix(0.9000,0,0,1,315.96,297.00)" font-size="20" font-weight="700" fill="#ffffff">Sales in $</text>
</g>
<rect x="95.5" y="277.5" width="24" height="23.5" fill="#ffffff" stroke="#c4c4c4" stroke-width="1"/>
<path d="M103 287 h9.2 l-4.6 5 z" fill="#666"/>
<rect x="191.5" y="277.5" width="24" height="23.5" fill="#ffffff" stroke="#c4c4c4" stroke-width="1"/>
<path d="M199 287 h9.2 l-4.6 5 z" fill="#666"/>
<rect x="287.5" y="277.5" width="24" height="23.5" fill="#ffffff" stroke="#c4c4c4" stroke-width="1"/>
<path d="M295 287 h9.2 l-4.6 5 z" fill="#666"/>
<rect x="383.5" y="277.5" width="24" height="23.5" fill="#ffffff" stroke="#c4c4c4" stroke-width="1"/>
<path d="M391 287 h9.2 l-4.6 5 z" fill="#666"/>
<text transform="matrix(1.0696,0,0,1,27.24,326.00)" font-size="20" fill="#000">Mouse</text>
<text transform="matrix(1.0978,0,0,1,123.19,326.00)" font-size="20" fill="#000">North</text>
<text transform="matrix(1.0611,0,0,1,220.72,326.00)" font-size="20" fill="#000">Tom</text>
<text transform="matrix(1.0012,0,0,1,360.70,326.00)" font-size="20" fill="#000">1075</text>
<text transform="matrix(1.0477,0,0,1,27.27,355.00)" font-size="20" fill="#000">Laptop</text>
<text transform="matrix(1.0080,0,0,1,124.09,355.00)" font-size="20" fill="#000">South</text>
<text transform="matrix(1.0403,0,0,1,219.48,355.00)" font-size="20" fill="#000">Harry</text>
<text transform="matrix(1.0009,0,0,1,349.50,355.00)" font-size="20" fill="#000">16700</text>
<text transform="matrix(1.0230,0,0,1,27.31,384.00)" font-size="20" fill="#000">Keyboard</text>
<text transform="matrix(0.9738,0,0,1,123.39,384.00)" font-size="20" fill="#000">East</text>
<text transform="matrix(1.0794,0,0,1,219.42,384.00)" font-size="20" fill="#000">Mark</text>
<text transform="matrix(1.0079,0,0,1,371.54,384.00)" font-size="20" fill="#000">870</text>
<text transform="matrix(0.9546,0,0,1,28.05,413.00)" font-size="20" fill="#000">Cables</text>
<text transform="matrix(1.0167,0,0,1,124.90,413.00)" font-size="20" fill="#000">West</text>
<text transform="matrix(1.0095,0,0,1,220.19,413.00)" font-size="20" fill="#000">Gerald</text>
<text transform="matrix(1.0356,0,0,1,360.65,413.00)" font-size="20" fill="#000">1170</text>
<text transform="matrix(1.1290,0,0,1,27.14,442.00)" font-size="20" fill="#000">Monitor</text>
<text transform="matrix(0.9738,0,0,1,123.39,442.00)" font-size="20" fill="#000">East</text>
<text transform="matrix(1.0794,0,0,1,219.42,442.00)" font-size="20" fill="#000">Mark</text>
<text transform="matrix(1.0143,0,0,1,371.39,442.00)" font-size="20" fill="#000">775</text>
<text transform="matrix(0.9614,0,0,1,28.13,471.00)" font-size="20" fill="#000">Scanners</text>
<text transform="matrix(1.0167,0,0,1,124.90,471.00)" font-size="20" fill="#000">West</text>
<text transform="matrix(0.9901,0,0,1,219.61,471.00)" font-size="20" fill="#000">Shaun</text>
<text transform="matrix(1.0012,0,0,1,360.70,471.00)" font-size="20" fill="#000">1595</text>
<text transform="matrix(1.0338,0,0,1,27.29,500.00)" font-size="20" fill="#000">Printers</text>
<text transform="matrix(1.0978,0,0,1,123.19,500.00)" font-size="20" fill="#000">North</text>
<text transform="matrix(1.0611,0,0,1,220.72,500.00)" font-size="20" fill="#000">Tom</text>
<text transform="matrix(1.0356,0,0,1,360.65,500.00)" font-size="20" fill="#000">1150</text>
<text transform="matrix(1.0017,0,0,1,27.35,529.00)" font-size="20" fill="#000">Hard Disk</text>
<text transform="matrix(1.0080,0,0,1,124.09,529.00)" font-size="20" fill="#000">South</text>
<text transform="matrix(0.9474,0,0,1,219.52,529.00)" font-size="20" fill="#000">Jean</text>
<text transform="matrix(1.0369,0,0,1,360.64,529.00)" font-size="20" fill="#000">1175</text>
<rect x="403" y="531" width="6" height="5" fill="#4a5fc1"/>
<rect x="504" y="275" width="331" height="28" fill="#d9e1f2" />
<line x1="504" y1="303.5" x2="835" y2="303.5" stroke="#8ea9db" stroke-width="1" />
<rect x="504" y="332" width="1110" height="58" fill="#d9e1f2" />
<line x1="504" y1="390.5" x2="1614" y2="390.5" stroke="#8ea9db" stroke-width="1" />
<rect x="504" y="391" width="1110" height="173" fill="#ffffff" />
<rect x="504" y="565" width="1110" height="29" fill="#d9e1f2" />
<line x1="504" y1="564.5" x2="1614" y2="564.5" stroke="#8ea9db" stroke-width="1" />
<text transform="matrix(1.0157,0,0,1,507.42,297.00)" font-size="20" fill="#000">Branch</text>
<text transform="matrix(1.0574,0,0,1,670.48,297.00)" font-size="20" fill="#000">(All)</text>
<rect x="810.5" y="277.5" width="24" height="24" fill="#ffffff" stroke="#c8c8c8" stroke-width="1"/>
<path d="M817.6 287.2 h9.8 l-4.9 5.2 z" fill="#606060"/>
<text transform="matrix(0.9220,0,0,1,507.95,355.00)" font-size="20" font-weight="700" fill="#000">Sum of Sales in $</text>
<text transform="matrix(0.9270,0,0,1,671.26,355.00)" font-size="20" font-weight="700" fill="#000">Column Labels</text>
<rect x="810.5" y="335.5" width="24" height="24" fill="#ffffff" stroke="#c8c8c8" stroke-width="1"/>
<path d="M817.6 345.2 h9.8 l-4.9 5.2 z" fill="#606060"/>
<text transform="matrix(0.9261,0,0,1,507.25,384.00)" font-size="20" font-weight="700" fill="#000">Row Labels</text>
<rect x="642.5" y="364.5" width="24" height="24" fill="#ffffff" stroke="#c8c8c8" stroke-width="1"/>
<path d="M649.6 374.2 h9.8 l-4.9 5.2 z" fill="#606060"/>
<text transform="matrix(0.9148,0,0,1,671.27,384.00)" font-size="20" font-weight="700" fill="#000">Cables</text>
<text transform="matrix(0.9487,0,0,1,838.42,384.00)" font-size="20" font-weight="700" fill="#000">Hard Disk Drives</text>
<text transform="matrix(0.9710,0,0,1,998.89,384.00)" font-size="20" font-weight="700" fill="#000">Keyboard</text>
<text transform="matrix(0.9721,0,0,1,1095.99,384.00)" font-size="20" font-weight="700" fill="#000">Laptop</text>
<text transform="matrix(1.0321,0,0,1,1169.61,384.00)" font-size="20" font-weight="700" fill="#000">Monitor</text>
<text transform="matrix(1.0098,0,0,1,1253.74,384.00)" font-size="20" font-weight="700" fill="#000">Mouse</text>
<text transform="matrix(0.9864,0,0,1,1325.87,384.00)" font-size="20" font-weight="700" fill="#000">Printers</text>
<text transform="matrix(0.9216,0,0,1,1408.35,384.00)" font-size="20" font-weight="700" fill="#000">Scanners</text>
<text transform="matrix(0.9922,0,0,1,1499.91,384.00)" font-size="20" font-weight="700" fill="#000">Grand Total</text>
<text transform="matrix(1.0234,0,0,1,507.48,413.00)" font-size="20" fill="#000">Gerald</text>
<text transform="matrix(1.0000,0,0,1,789.15,413.00)" font-size="20" fill="#000">1170</text>
<text transform="matrix(1.0000,0,0,1,1568.15,413.00)" font-size="20" fill="#000">1170</text>
<text transform="matrix(1.0551,0,0,1,506.76,442.00)" font-size="20" fill="#000">Harry</text>
<text transform="matrix(1.0000,0,0,1,1107.55,442.00)" font-size="20" fill="#000">16700</text>
<text transform="matrix(1.0000,0,0,1,1555.55,442.00)" font-size="20" fill="#000">16700</text>
<text transform="matrix(0.9665,0,0,1,507.31,471.00)" font-size="20" fill="#000">Jean</text>
<text transform="matrix(1.0000,0,0,1,950.20,471.00)" font-size="20" fill="#000">1175</text>
<text transform="matrix(1.0000,0,0,1,1568.20,471.00)" font-size="20" fill="#000">1175</text>
<text transform="matrix(1.1005,0,0,1,506.68,500.00)" font-size="20" fill="#000">Mark</text>
<text transform="matrix(1.0000,0,0,1,1056.80,500.00)" font-size="20" fill="#000">870</text>
<text transform="matrix(1.0000,0,0,1,1214.85,500.00)" font-size="20" fill="#000">775</text>
<text transform="matrix(1.0000,0,0,1,1566.75,500.00)" font-size="20" fill="#000">1645</text>
<text transform="matrix(0.9991,0,0,1,507.30,529.00)" font-size="20" fill="#000">Shaun</text>
<text transform="matrix(1.0000,0,0,1,1448.75,529.00)" font-size="20" fill="#000">1595</text>
<text transform="matrix(1.0000,0,0,1,1566.75,529.00)" font-size="20" fill="#000">1595</text>
<text transform="matrix(1.0972,0,0,1,508.01,558.00)" font-size="20" fill="#000">Tom</text>
<text transform="matrix(1.0000,0,0,1,1275.75,558.00)" font-size="20" fill="#000">1075</text>
<text transform="matrix(1.0000,0,0,1,1359.15,558.00)" font-size="20" fill="#000">1150</text>
<text transform="matrix(1.0000,0,0,1,1566.75,558.00)" font-size="20" fill="#000">2225</text>
<text transform="matrix(0.9931,0,0,1,507.71,587.00)" font-size="20" font-weight="700" fill="#000">Grand Total</text>
<text transform="matrix(1.0000,0,0,1,788.85,587.00)" font-size="20" font-weight="700" fill="#000">1170</text>
<text transform="matrix(1.0000,0,0,1,949.60,587.00)" font-size="20" font-weight="700" fill="#000">1175</text>
<text transform="matrix(1.0000,0,0,1,1056.85,587.00)" font-size="20" font-weight="700" fill="#000">870</text>
<text transform="matrix(1.0000,0,0,1,1107.60,587.00)" font-size="20" font-weight="700" fill="#000">16700</text>
<text transform="matrix(1.0000,0,0,1,1214.60,587.00)" font-size="20" font-weight="700" fill="#000">775</text>
<text transform="matrix(1.0000,0,0,1,1275.50,587.00)" font-size="20" font-weight="700" fill="#000">1075</text>
<text transform="matrix(1.0000,0,0,1,1358.85,587.00)" font-size="20" font-weight="700" fill="#000">1150</text>
<text transform="matrix(1.0000,0,0,1,1448.50,587.00)" font-size="20" font-weight="700" fill="#000">1595</text>
<text transform="matrix(1.0000,0,0,1,1555.60,587.00)" font-size="20" font-weight="700" fill="#000">24510</text>
<path d="M1358.5 599.5 V614 L1362 611 L1364.5 616.5 L1366.8 615.6 L1364.3 610.6 L1369.5 610.3 Z" fill="#fff" stroke="#222" stroke-width="1"/>
<line x1="0" y1="858.5" x2="1646" y2="858.5" stroke="#9a9a9a" stroke-width="1" />
</svg></body></html>
